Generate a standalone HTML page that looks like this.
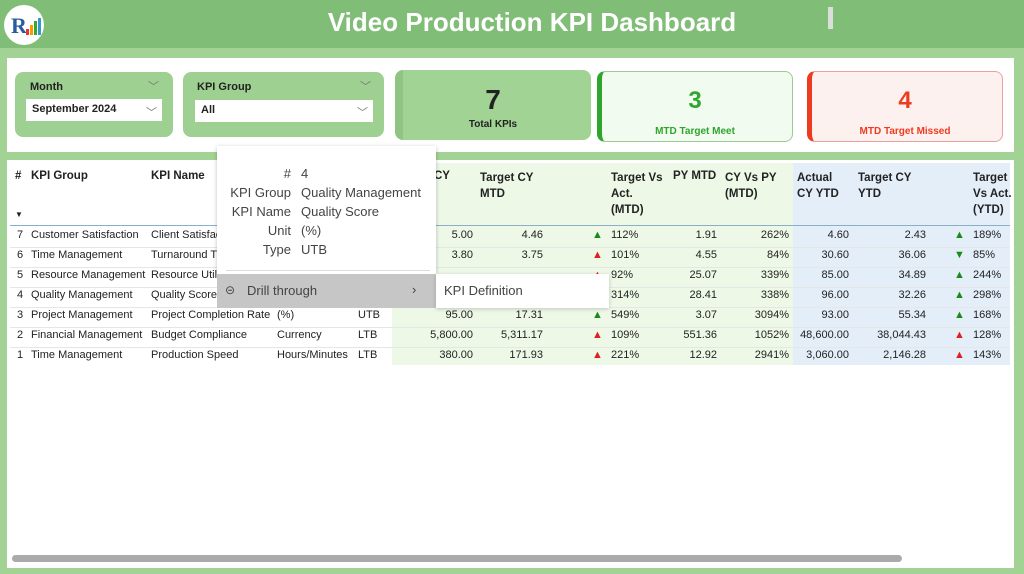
<!DOCTYPE html>
<html><head><meta charset="utf-8"><style>
*{margin:0;padding:0;box-sizing:border-box}
body{width:1024px;height:574px;background:#a2d294;font-family:"Liberation Sans",sans-serif;position:relative;overflow:hidden;color:#222}
.a{position:absolute}
.hdr{left:0;top:0;width:1024px;height:48px;background:#80bd76}
.title{left:0;width:1064px;top:7px;text-align:center;color:#fff;font-weight:bold;font-size:26px}
.logo{left:4px;top:5px;width:40px;height:40px;border-radius:50%;background:#fff}
.panel{background:#fff}
.slicer{background:#9ed092;border-radius:8px}
.sl{font-size:11px;font-weight:bold;color:#222}
.dd{background:#fff;font-size:11px;font-weight:bold;height:22px;padding:4px 6px}
.chev{color:#777;font-size:11px}
.card{border-radius:8px;text-align:center}
.t{font-size:11.5px;white-space:nowrap}
.b{font-weight:bold}
.tip{font-size:13px;color:#444}
</style></head><body>
<div class="a hdr"></div>
<div class="a logo"><svg width="40" height="40"><text x="7" y="28" font-size="22" font-weight="bold" fill="#2a5c9c" font-family="Liberation Serif">R</text><rect x="22" y="24" width="3" height="6" fill="#e33"/><rect x="26" y="20" width="3" height="10" fill="#f90"/><rect x="30" y="16" width="3" height="14" fill="#3a3"/><rect x="34" y="13" width="3" height="17" fill="#39c"/></svg></div>
<div class="a title">Video Production KPI Dashboard</div>
<div class="a" style="left:828px;top:7px;width:5px;height:22px;background:#ddd"></div>

<div class="a panel" style="left:7px;top:58px;width:1007px;height:94px"></div>
<div class="a slicer" style="left:15px;top:72px;width:158px;height:65px"></div>
<div class="a sl" style="left:30px;top:81px">Month</div>
<div class="a chev" style="left:148px;top:78px">﹀</div>
<div class="a dd" style="left:26px;top:99px;width:136px">September 2024</div>
<div class="a chev" style="left:146px;top:104px">﹀</div>
<div class="a slicer" style="left:183px;top:72px;width:201px;height:65px"></div>
<div class="a sl" style="left:197px;top:81px">KPI Group</div>
<div class="a chev" style="left:360px;top:78px">﹀</div>
<div class="a dd" style="left:195px;top:100px;width:178px">All</div>
<div class="a chev" style="left:357px;top:104px">﹀</div>

<div class="a card" style="left:395px;top:70px;width:196px;height:70px;background:#a0d394;border-left:8px solid #8fc483"></div>
<div class="a b" style="left:395px;top:84px;width:196px;text-align:center;font-size:28px">7</div>
<div class="a b" style="left:395px;top:119px;width:196px;text-align:center;font-size:10px">Total KPIs</div>
<div class="a card" style="left:597px;top:71px;width:196px;height:71px;background:#f1fbef;border:1px solid #9ccb93;border-left:5px solid #2ea62e"></div>
<div class="a b" style="left:597px;top:87px;width:196px;text-align:center;font-size:24px;color:#2ea62e">3</div>
<div class="a b" style="left:597px;top:126px;width:196px;text-align:center;font-size:10px;color:#2ea62e">MTD Target Meet</div>
<div class="a card" style="left:807px;top:71px;width:196px;height:71px;background:#fdf1f0;border:1px solid #e8a29c;border-left:5px solid #ee3a1e"></div>
<div class="a b" style="left:807px;top:87px;width:196px;text-align:center;font-size:24px;color:#ee3a1e">4</div>
<div class="a b" style="left:807px;top:126px;width:196px;text-align:center;font-size:10px;color:#ee3a1e">MTD Target Missed</div>

<div class="a panel" style="left:7px;top:160px;width:1007px;height:408px"></div>
<div class="a" style="left:392px;top:163px;width:401px;height:202px;background:#eef8e7"></div>
<div class="a" style="left:793px;top:163px;width:217px;height:202px;background:#e4eef9"></div>
<div class="a" style="left:10px;top:225px;width:1000px;height:1px;background:#8ab0c8"></div>

<div class="a t b" style="left:15px;top:170px">#</div>
<div class="a t b" style="left:31px;top:170px">KPI Group</div>
<div class="a t b" style="left:151px;top:170px">KPI Name</div>
<div class="a" style="left:15px;top:210px;font-size:8px">▼</div>
<div class="a t b" style="left:434px;top:170px">CY</div>
<div class="a t b" style="left:480px;top:170px;line-height:16px">Target CY<br>MTD</div>
<div class="a t b" style="left:611px;top:170px;line-height:16px">Target Vs<br>Act.<br>(MTD)</div>
<div class="a t b" style="left:673px;top:170px">PY MTD</div>
<div class="a t b" style="left:725px;top:170px;line-height:16px">CY Vs PY<br>(MTD)</div>
<div class="a t b" style="left:797px;top:170px;line-height:16px">Actual<br>CY YTD</div>
<div class="a t b" style="left:858px;top:170px;line-height:16px">Target CY<br>YTD</div>
<div class="a t b" style="left:973px;top:170px;line-height:16px">Target<br>Vs Act.<br>(YTD)</div>

<div id="rows"></div>
<script>
var R=[["7","Customer Satisfaction","Client Satisfac","","","5.00","4.46",1,"112%","1.91","262%","4.60","2.43",1,"189%"],
["6","Time Management","Turnaround Ti","","","3.80","3.75",0,"101%","4.55","84%","30.60","36.06",2,"85%"],
["5","Resource Management","Resource Utili","","","","",0,"92%","25.07","339%","85.00","34.89",1,"244%"],
["4","Quality Management","Quality Score","","","","",1,"314%","28.41","338%","96.00","32.26",1,"298%"],
["3","Project Management","Project Completion Rate","(%)","UTB","95.00","17.31",1,"549%","3.07","3094%","93.00","55.34",1,"168%"],
["2","Financial Management","Budget Compliance","Currency","LTB","5,800.00","5,311.17",0,"109%","551.36","1052%","48,600.00","38,044.43",0,"128%"],
["1","Time Management","Production Speed","Hours/Minutes","LTB","380.00","171.93",0,"221%","12.92","2941%","3,060.00","2,146.28",0,"143%"]];
var h="";
R.forEach(function(r,i){var y=229+i*20;
if(i<6)h+='<div class="a" style="left:10px;top:'+(y+18)+'px;width:1000px;height:1px;background:#e6e6e6"></div>';
function c(x,t,right){h+='<div class="a t" style="'+(right?'left:'+(x-100)+'px;width:100px;text-align:right':'left:'+x+'px')+';top:'+y+'px;font-size:11px">'+t+'</div>'}
function ar(x,k){var s=k==2?'<span style="color:#1b8a1b">▼</span>':k==1?'<span style="color:#1b8a1b">▲</span>':'<span style="color:#e02020">▲</span>';h+='<div class="a" style="left:'+x+'px;top:'+(y)+'px;font-size:11px">'+s+'</div>'}
c(17,r[0]);c(31,r[1]);c(151,r[2]);c(277,r[3]);c(358,r[4]);c(473,r[5],1);c(543,r[6],1);ar(592,r[7]);c(611,r[8]);c(717,r[9],1);c(789,r[10],1);c(849,r[11],1);c(926,r[12],1);ar(954,r[13]);c(973,r[14]);
});
document.getElementById("rows").innerHTML=h;
</script>

<div class="a" style="left:217px;top:146px;width:219px;height:128px;background:#fff;box-shadow:0 1px 4px rgba(0,0,0,.25)"></div>
<div class="a tip" style="left:217px;top:164px;width:74px;text-align:right;line-height:19px">#<br>KPI Group<br>KPI Name<br>Unit<br>Type</div>
<div class="a tip" style="left:301px;top:164px;line-height:19px;white-space:nowrap">4<br>Quality Management<br>Quality Score<br>(%)<br>UTB</div>
<div class="a" style="left:226px;top:270px;width:204px;height:1px;background:#ddd"></div>
<div class="a" style="left:217px;top:274px;width:219px;height:34px;background:#c6c6c6"></div>
<div class="a tip" style="left:225px;top:283px;font-size:12px">⊝</div>
<div class="a tip" style="left:247px;top:283px">Drill through</div>
<div class="a tip" style="left:412px;top:282px">›</div>
<div class="a" style="left:436px;top:274px;width:173px;height:34px;background:#fff;box-shadow:0 1px 4px rgba(0,0,0,.2)"></div>
<div class="a tip" style="left:444px;top:283px">KPI Definition</div>

<div class="a" style="left:12px;top:555px;width:890px;height:7px;border-radius:4px;background:#aaa"></div>
</body></html>
